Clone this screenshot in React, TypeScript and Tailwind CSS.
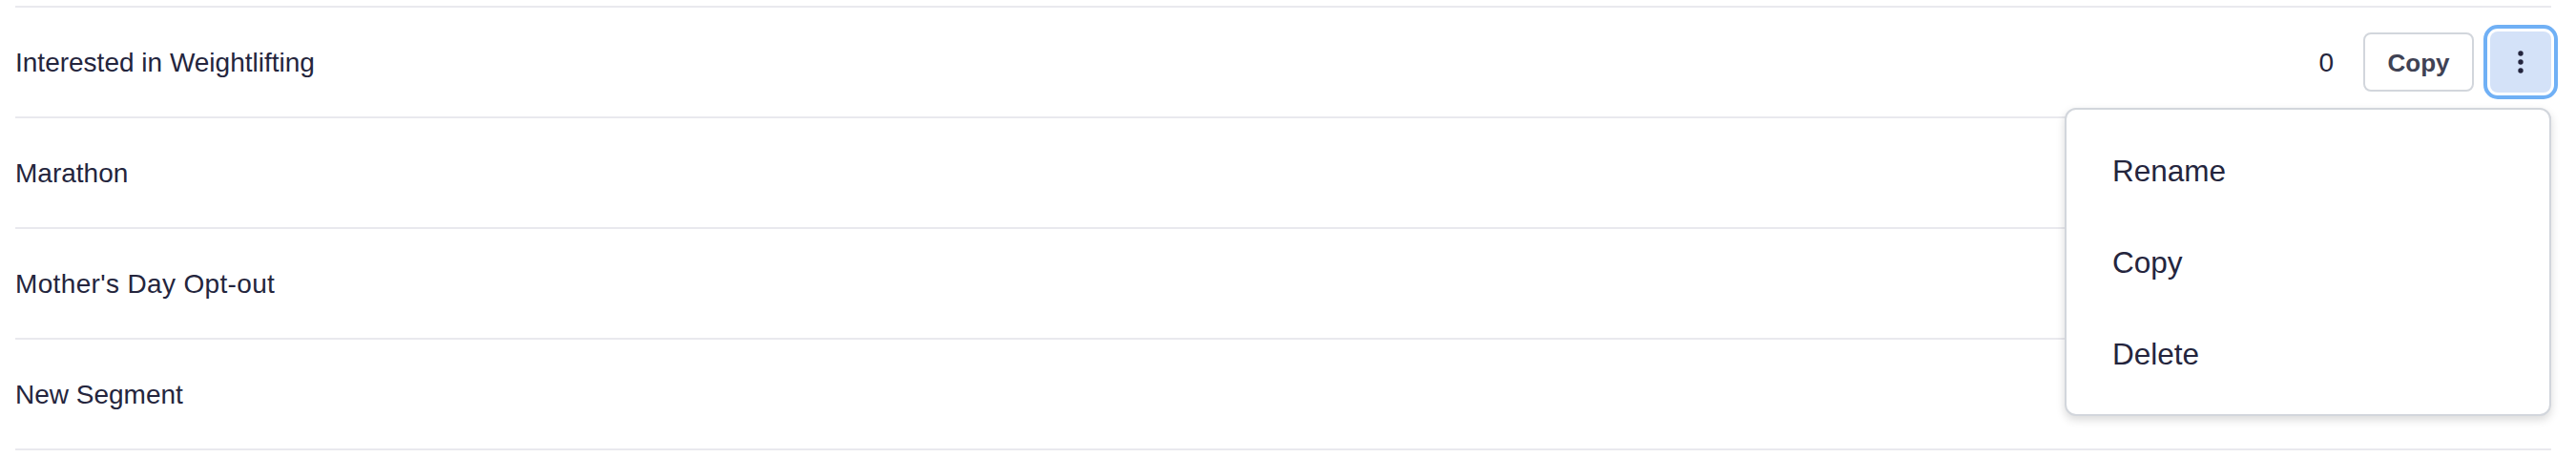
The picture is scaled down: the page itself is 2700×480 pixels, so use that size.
const rows = ["Interested in Weightlifting", "Marathon", "Mother's Day Opt-out", "New Segment"];

function Kebab() {
  return (
    <svg width="6" height="24" viewBox="0 0 6 24" fill="#24253d">
      <circle cx="3" cy="3" r="2.7" />
      <circle cx="3" cy="12" r="2.7" />
      <circle cx="3" cy="21" r="2.7" />
    </svg>
  );
}

export default function App() {
  return (
    <div className="relative h-[480px] w-[2700px] overflow-hidden bg-white font-['Liberation_Sans',sans-serif] text-[#24253d]">
      <div className="ml-4 mr-[26px] mt-1.5 border-t-2 border-[#e9e9ee]">
        {rows.map((row, i) => (
          <div key={row} className="flex h-[116px] items-center justify-between border-b-2 border-[#e9e9ee] text-[28px]">
            <span className={i === 2 ? "pt-[2px] tracking-[0.35px]" : "pt-[2px]"}>{row}</span>
            {i === 0 && (
              <div className="flex items-center">
                <span className="mr-[31px] pt-[2px]">0</span>
                <button className="h-[62px] w-[116px] rounded-lg border-2 border-[#d2d6dc] bg-white pt-[2px] text-[26px] font-bold text-[#3f4254]">Copy</button>
                <button className="ml-[17px] flex h-[64px] w-[64px] items-center justify-center rounded-lg bg-[#d4e2f8] outline-[4px] outline-offset-[3px] outline-[#70b0f5]">
                  <Kebab />
                </button>
              </div>
            )}
          </div>
        ))}
      </div>
      <div className="absolute right-[26px] top-[113px] w-[510px] rounded-xl border-2 border-[#d2d6dc] bg-white pb-[14px] pl-[48px] pt-[17px] text-[31.5px] shadow-[0_4px_10px_rgba(0,0,0,0.15)]">
        <div className="flex h-[96px] items-center">Rename</div>
        <div className="flex h-[96px] items-center">Copy</div>
        <div className="flex h-[96px] items-center">Delete</div>
      </div>
    </div>
  );
}
